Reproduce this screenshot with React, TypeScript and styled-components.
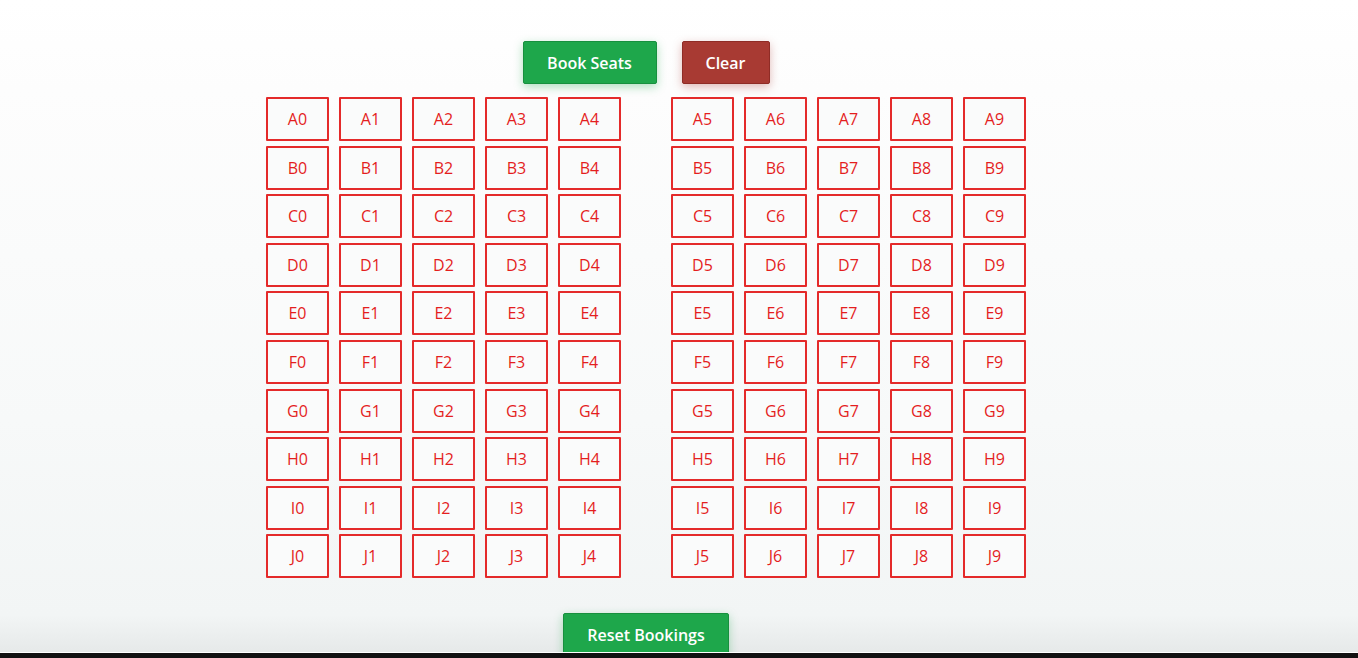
import styled, { createGlobalStyle } from 'styled-components'

const GlobalStyle = createGlobalStyle`
  html, body {
    margin: 0;
    padding: 0;
    height: 100%;
    overflow: hidden;
  }
  body {
    font-family: "Open Sans", "Noto Sans", sans-serif;
  }
`

const Page = styled.div`
  min-height: 658px;
  padding-right: 66px;
  background: linear-gradient(
    to bottom,
    #ffffff 0px,
    #fdfdfd 90px,
    #f7f9f9 420px,
    #f2f5f5 615px,
    #e6e9e9 652px
  );
  display: flex;
  flex-direction: column;
  align-items: center;
  padding-top: 41px;
  box-sizing: border-box;
`

const Toolbar = styled.div`
  display: flex;
  gap: 25px;
  justify-content: center;
`

const ActionButton = styled.button<{ $tone: 'green' | 'red'; $width: number }>`
  width: ${p => p.$width}px;
  height: 43px;
  border: 1px solid ${p => (p.$tone === 'green' ? '#17903e' : '#8f2c26')};
  border-radius: 2px;
  background: ${p => (p.$tone === 'green' ? '#1ea74b' : '#a83a33')};
  color: #ffffff;
  font-family: "Open Sans", "Noto Sans", sans-serif;
  font-weight: 600;
  font-size: 16px;
  box-shadow: 0 3px 10px ${p => (p.$tone === 'green' ? 'rgba(30, 167, 75, 0.35)' : 'rgba(168, 58, 51, 0.35)')};
  cursor: pointer;
  padding: 0;
`

const Hall = styled.div`
  display: flex;
  gap: 50px;
  margin-top: 13px;
`

const Block = styled.div`
  display: grid;
  grid-template-columns: repeat(5, 63px);
  column-gap: 10px;
  row-gap: 4.6px;
`

const Seat = styled.div`
  width: 63px;
  height: 44px;
  box-sizing: border-box;
  border: 2px solid #e42a2a;
  border-radius: 1px;
  background: #fafbfb;
  color: #e41e1e;
  font-size: 16px;
  display: flex;
  align-items: center;
  justify-content: center;
  cursor: pointer;
`

const Footer = styled.div`
  margin-top: 35px;
`

const BottomEdge = styled.div`
  position: fixed;
  left: 0;
  right: 0;
  bottom: 0;
  height: 5px;
  border-top: 1.5px solid #ffffff;
  background: #111111;
`

const rows = ['A', 'B', 'C', 'D', 'E', 'F', 'G', 'H', 'I', 'J']

function SeatBlock(props: { cols: number[] }) {
  return (
    <Block>
      {rows.map(r =>
        props.cols.map(c => <Seat key={r + c}>{r + c}</Seat>)
      )}
    </Block>
  )
}

function App() {
  return (
    <>
      <GlobalStyle />
      <Page>
        <Toolbar>
          <ActionButton $tone="green" $width={134}>Book Seats</ActionButton>
          <ActionButton $tone="red" $width={88}>Clear</ActionButton>
        </Toolbar>
        <Hall>
          <SeatBlock cols={[0, 1, 2, 3, 4]} />
          <SeatBlock cols={[5, 6, 7, 8, 9]} />
        </Hall>
        <Footer>
          <ActionButton $tone="green" $width={166}>Reset Bookings</ActionButton>
        </Footer>
      </Page>
      <BottomEdge />
    </>
  )
}

export default App
